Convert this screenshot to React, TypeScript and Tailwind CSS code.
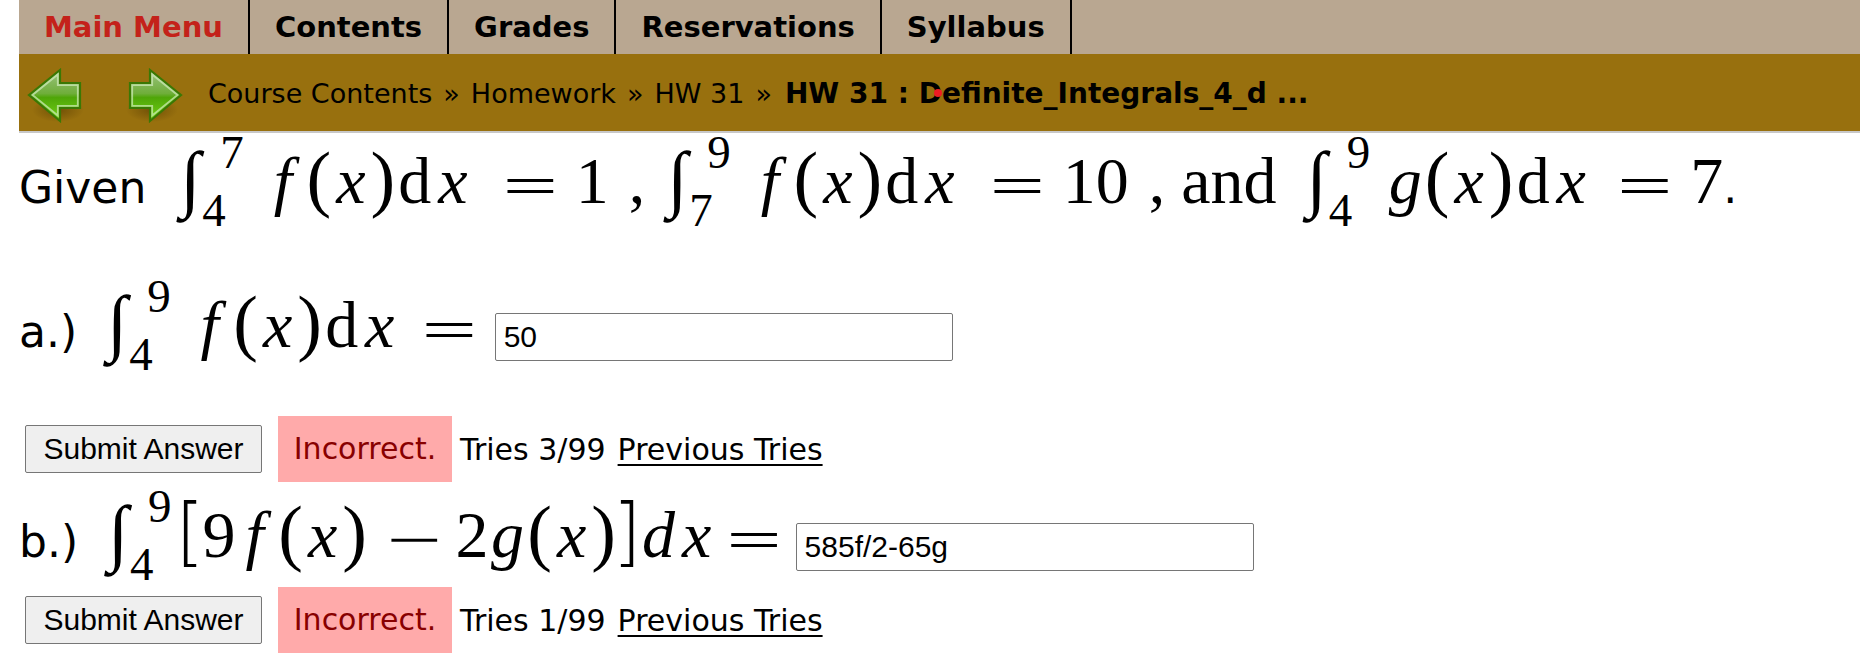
import type { ReactNode } from 'react'

const tabs = ['Main Menu', 'Contents', 'Grades', 'Reservations', 'Syllabus']
const crumbs = ['Course Contents', 'Homework', 'HW 31']

function Arrow({ id, flip }: { id: string; flip?: boolean }) {
  return (
    <svg width="60" height="60" viewBox="0 0 60 60" className={flip ? '-scale-x-100' : ''} aria-hidden="true">
      <defs>
        <linearGradient id={id} x1="0" y1="0" x2="0" y2="1">
          <stop offset="0" stopColor="#9cc382" />
          <stop offset="0.46" stopColor="#6fae3a" />
          <stop offset="0.54" stopColor="#4fa608" />
          <stop offset="1" stopColor="#73d216" />
        </linearGradient>
        <radialGradient id={`${id}-shadow`}>
          <stop offset="0" stopColor="#4a3200" stopOpacity="0.5" />
          <stop offset="1" stopColor="#4a3200" stopOpacity="0" />
        </radialGradient>
      </defs>
      <ellipse cx="34" cy="46" rx="26" ry="12" fill={`url(#${id}-shadow)`} />
      <path d="M5 31 L36 6 V19 H56 V44 H36 V57 Z" fill={`url(#${id})`} stroke="#3a7804" strokeWidth="2.2" />
      <path d="M8.5 31 L33.8 10.5 V21.2 H53.8 V41.8 H33.8 V51.5 Z" fill="none" stroke="#d3ecbf" strokeWidth="1.8" strokeOpacity="0.7" />
    </svg>
  )
}

function Var({ children }: { children: ReactNode }) {
  return <i className="w-[38px] text-center">{children}</i>
}

function Paren({ children }: { children: ReactNode }) {
  return <span className="w-[26px] text-center text-[74px] leading-none">{children}</span>
}

function Bracket({ children }: { children: ReactNode }) {
  return (
    <span className="w-[27px] text-center font-['DejaVu_Sans'] text-[74px] leading-none font-extralight">
      {children}
    </span>
  )
}

function Rel({ className, children }: { className: string; children: ReactNode }) {
  return (
    <span
      className={`w-[52px] self-center pt-1 text-center font-['DejaVu_Sans'] text-[73px] leading-none font-extralight ${className}`}
    >
      {children}
    </span>
  )
}

function Integral({ from, to }: { from: number; to: number }) {
  return (
    <>
      <i className="w-10 text-center text-[74px] leading-[90px]">∫</i>
      <span className="-my-4 -ml-2 flex flex-col self-center pt-[6px] text-[47px] leading-[58px]">
        <span className="pl-[18px]">{to}</span>
        <span>{from}</span>
      </span>
    </>
  )
}

// name(x)
function Call({ name }: { name: string }) {
  return (
    <>
      <Var>{name}</Var>
      <span className={name === 'f' ? 'ml-1 flex items-baseline' : 'flex items-baseline'}>
        <Paren>(</Paren>
        <Var>x</Var>
        <Paren>)</Paren>
      </span>
    </>
  )
}

function Dx() {
  return (
    <>
      <span className="w-[38px] text-center">d</span>
      <Var>x</Var>
    </>
  )
}

function Group({ className, children }: { className: string; children: ReactNode }) {
  return <span className={`flex items-baseline ${className}`}>{children}</span>
}

function Row({ children }: { children: ReactNode }) {
  return (
    <div className="flex h-24 items-baseline whitespace-pre font-['Liberation_Serif',serif] text-[66px] leading-[96px]">
      {children}
    </div>
  )
}

function Label({ children }: { children: ReactNode }) {
  return <span className="font-['DejaVu_Sans',sans-serif] text-[44px] leading-none">{children}</span>
}

function Answer({ label, value }: { label: string; value: string }) {
  return (
    <input
      type="text"
      aria-label={label}
      defaultValue={value}
      className="h-12 w-[458px] rounded-xs border border-[#767676] bg-white px-2 font-['Liberation_Sans',sans-serif] text-[30px] leading-[46px]"
    />
  )
}

function Result({ tries }: { tries: string }) {
  return (
    <div className="flex items-center pl-[6px] text-[30px]">
      <button
        type="button"
        className="h-12 w-[237px] rounded-xs border border-[#767676] bg-[#efefef] font-['Liberation_Sans',sans-serif] text-[30px] leading-none"
      >
        Submit Answer
      </button>
      <span className="ml-4 w-[174px] bg-[#ffaaaa] text-center leading-[66px] text-[#880000]">Incorrect.</span>
      <span className="ml-2">Tries {tries}</span>
      <a href="#" className="ml-3 underline decoration-2 underline-offset-4">
        Previous Tries
      </a>
    </div>
  )
}

export default function App() {
  return (
    <div className="pl-[19px] font-['DejaVu_Sans',sans-serif] text-black">
      <nav className="flex h-[54px] bg-[#b9a791] text-[29px] font-bold">
        {tabs.map((tab, i) => (
          <a
            key={tab}
            href="#"
            className={`flex items-center border-r-2 border-black px-[25px] pt-[2px] ${i === 0 ? 'text-[#c4221a]' : ''}`}
          >
            {tab}
          </a>
        ))}
      </nav>

      <div className="flex h-[79px] items-center border-b-2 border-[#c8c8c8] bg-[#98700e] pt-[2px] text-[27px] whitespace-nowrap">
        <a href="#" aria-label="Previous" className="ml-[5px]">
          <Arrow id="prev" />
        </a>
        <a href="#" aria-label="Next" className="ml-[42px]">
          <Arrow id="next" flip />
        </a>
        <div className="ml-[22px] flex items-baseline gap-[11px]">
          {crumbs.map((crumb) => (
            <span key={crumb} className="flex gap-[11px]">
              <a href="#">{crumb}</a>
              <span>»</span>
            </span>
          ))}
          <b className="ml-[2px] text-[28px]">
            HW 31 :{' '}
            <span className="relative">
              D<span className="absolute top-3 right-0 size-2 rounded-full bg-[#ee1c24]" />
            </span>
            efinite_Integrals_4_d ...
          </b>
        </div>
      </div>

      <main>
        <Row>
          <Label>Given</Label>
          <Group className="ml-6">
            <Integral from={4} to={7} />
          </Group>
          <Group className="ml-5">
            <Call name="f" />
            <Dx />
          </Group>
          <Rel className="ml-7">=</Rel>
          <span className="ml-6">1</span>
          <span className="ml-5">,</span>
          <Group className="ml-3">
            <Integral from={7} to={9} />
          </Group>
          <Group className="ml-5">
            <Call name="f" />
            <Dx />
          </Group>
          <Rel className="ml-7">=</Rel>
          <span className="ml-6">10</span>
          <span className="ml-5">,</span>
          <span className="ml-4">and</span>
          <Group className="ml-5">
            <Integral from={4} to={9} />
          </Group>
          <Group className="ml-4">
            <Call name="g" />
            <Dx />
          </Group>
          <Rel className="ml-6">=</Rel>
          <span className="ml-6">7</span>
          <Label>.</Label>
        </Row>

        <div className="mt-12">
          <Row>
            <Label>a.)</Label>
            <Group className="ml-5">
              <Integral from={4} to={9} />
            </Group>
            <Group className="ml-5">
              <Call name="f" />
              <Dx />
            </Group>
            <Rel className="mr-6 ml-5">=</Rel>
            <Answer label="Answer a" value="50" />
          </Row>
        </div>
        <div className="mt-[43px]">
          <Result tries="3/99" />
        </div>

        <div className="mt-[5px]">
          <Row>
            <Label>b.)</Label>
            <Group className="mr-1 ml-5">
              <Integral from={4} to={9} />
            </Group>
            <Bracket>[</Bracket>
            <span>9</span>
            <Call name="f" />
            <Rel className="mr-5 ml-4">−</Rel>
            <span>2</span>
            <Call name="g" />
            <Group className="-ml-1">
              <Bracket>]</Bracket>
              <Var>d</Var>
              <Var>x</Var>
            </Group>
            <Rel className="mr-5 ml-2">=</Rel>
            <Answer label="Answer b" value="585f/2-65g" />
          </Row>
        </div>
        <div className="mt-1">
          <Result tries="1/99" />
        </div>
      </main>
    </div>
  )
}
